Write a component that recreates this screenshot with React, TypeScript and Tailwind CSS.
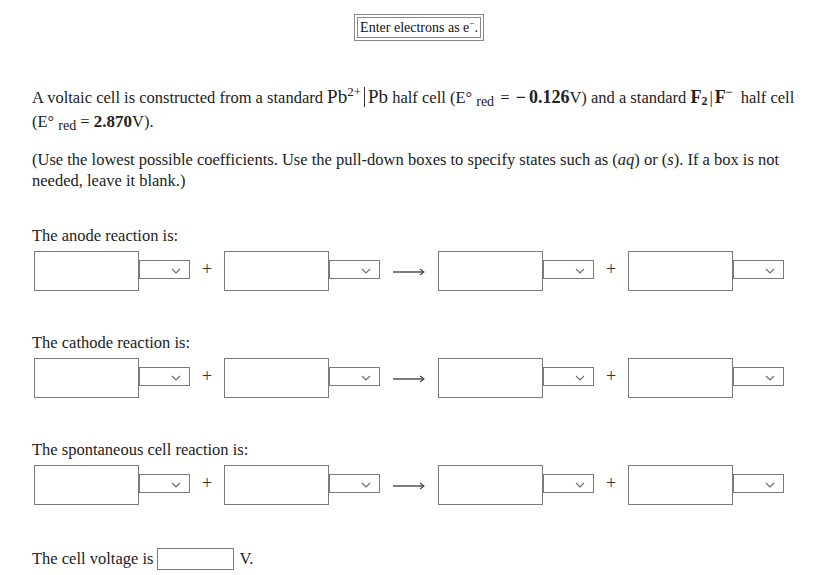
import React from 'react';

const serif = { fontFamily: '"Liberation Serif", "Times New Roman", serif' };

const Chevron = () => (
  <svg width="10" height="6" viewBox="0 0 10 6" className="absolute right-[8px] top-[7px]">
    <path d="M1 1 L5 5 L9 1" fill="none" stroke="#6b6b6b" strokeWidth="1.1" />
  </svg>
);

const Species = () => (
  <div className="flex items-center">
    <input className="w-[105px] h-[40px] border border-[#7a7a7a] bg-white outline-none" />
    <div className="relative w-[51px] h-[19px] border border-[#7a7a7a] bg-white mb-[3px]">
      <Chevron />
    </div>
  </div>
);

const Plus = () => (
  <span className="w-[34px] text-center text-[18px] leading-none text-[#333] mb-[3px]">+</span>
);

const Arrow = () => (
  <div className="w-[58px] flex justify-center mt-[2px]">
    <svg width="34" height="10" viewBox="0 0 34 10">
      <path d="M1 5 H32" stroke="#444" strokeWidth="1.4" />
      <path d="M28 2 L32 5 L28 8" fill="none" stroke="#444" strokeWidth="1.1" />
    </svg>
  </div>
);

const ReactionRow = ({ label }: { label: string }) => (
  <div>
    <div className="pl-[32px] h-[21px] leading-[21px] text-[16.5px] text-[#222]">{label}</div>
    <div className="flex items-center pl-[34px] mt-[4px] h-[41px]">
      <Species />
      <Plus />
      <Species />
      <Arrow />
      <Species />
      <Plus />
      <Species />
    </div>
  </div>
);

export default function App() {
  return (
    <div className="w-[818px] h-[575px] bg-white text-[#222] overflow-hidden" style={serif}>
      <div className="pt-[14px] pl-[354px]">
        <div className="w-[130px] h-[27px] border border-[#8a8a8a] p-[2px]">
          <div className="h-full border border-[#8a8a8a] flex items-center justify-center text-[14px] text-[#111] whitespace-nowrap">
            Enter electrons as e<sup className="text-[9px] -top-[5px]">−</sup>.
          </div>
        </div>
      </div>

      <p className="mt-[44px] pl-[32px] text-[16.5px] leading-[24px] whitespace-nowrap">
        A voltaic cell is constructed from a standard{' '}
        <span className="text-[19px]">Pb<sup className="text-[13px] -top-[7px]">2+</sup></span>
        <span className="inline-block w-[1px] h-[20px] bg-[#333] mx-[3px] align-[-4px]" />
        <span className="text-[19px]">Pb</span> half cell (E°{' '}
        <sub className="text-[14px] -bottom-[3px]">red</sub>{' '}
        <span className="mx-[2px]">=</span>{' '}
        <b className="text-[18px]"><span className="mr-[3px]">−</span>0.126</b>V) and a standard{' '}
        <b className="text-[18px]">F<sub className="text-[12px] bottom-[-2px]">2</sub></b>
        <span className="text-[17px] mx-[2px]">|</span>
        <b className="text-[18px]">F<sup className="text-[12px] -top-[7px]">−</sup></b>
        <span className="ml-[8px]">half cell</span>
        <br />
        (E° <sub className="text-[14px] -bottom-[3px]">red</sub> = <b className="text-[17px]">2.870</b>V).
      </p>

      <p className="mt-[15px] pl-[32px] text-[16.5px] leading-[21px] whitespace-nowrap">
        (Use the lowest possible coefficients. Use the pull-down boxes to specify states such as (<i>aq</i>) or (<i>s</i>). If a box is not
        <br />
        needed, leave it blank.)
      </p>

      <div className="mt-[34px] flex flex-col gap-[41px]">
        <ReactionRow label="The anode reaction is:" />
        <ReactionRow label="The cathode reaction is:" />
        <ReactionRow label="The spontaneous cell reaction is:" />
      </div>

      <div className="mt-[43px] pl-[32px] flex items-center text-[16.5px] h-[22px]">
        <span>The cell voltage is</span>
        <input className="ml-[4px] w-[77px] h-[22px] border border-[#7a7a7a] bg-white outline-none" />
        <span className="ml-[5px]">V.</span>
      </div>
    </div>
  );
}
